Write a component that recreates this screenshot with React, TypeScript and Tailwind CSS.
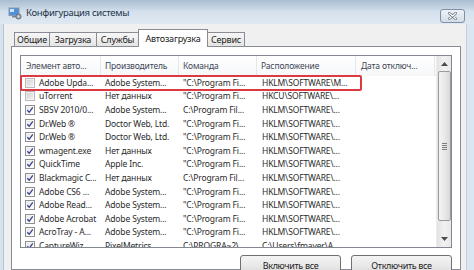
import React from "react";

type Row = { on: boolean; a: string; b: string; c: string; d: string };

const rows: Row[] = [
  { on: false, a: "Adobe Upda...", b: "Adobe System...", c: "\"C:\\Program Fi...", d: "HKLM\\SOFTWARE\\M..." },
  { on: false, a: "uTorrent", b: "Нет данных", c: "\"C:\\Program Fi...", d: "HKCU\\SOFTWARE\\..." },
  { on: true, a: "SBSV 2010/0...", b: "Adobe System...", c: "C:\\Program Fil...", d: "HKLM\\SOFTWARE\\..." },
  { on: true, a: "Dr.Web ®", b: "Doctor Web, Ltd.", c: "\"C:\\Program Fi...", d: "HKLM\\SOFTWARE\\..." },
  { on: true, a: "Dr.Web ®", b: "Doctor Web, Ltd.", c: "\"C:\\Program Fi...", d: "HKLM\\SOFTWARE\\..." },
  { on: true, a: "wmagent.exe", b: "Нет данных", c: "\"C:\\Program Fi...", d: "HKLM\\SOFTWARE\\..." },
  { on: true, a: "QuickTime", b: "Apple Inc.", c: "\"C:\\Program Fi...", d: "HKLM\\SOFTWARE\\..." },
  { on: true, a: "Blackmagic C...", b: "Нет данных", c: "C:\\Program Fil...", d: "HKLM\\SOFTWARE\\..." },
  { on: true, a: "Adobe CS6 ...", b: "Adobe System...", c: "\"C:\\Program Fi...", d: "HKLM\\SOFTWARE\\..." },
  { on: true, a: "Adobe Read...", b: "Adobe System...", c: "\"C:\\Program Fi...", d: "HKLM\\SOFTWARE\\..." },
  { on: true, a: "Adobe Acrobat", b: "Adobe System...", c: "\"C:\\Program Fi...", d: "HKLM\\SOFTWARE\\..." },
  { on: true, a: "AcroTray - A...", b: "Adobe System...", c: "\"C:\\Program Fi...", d: "HKLM\\SOFTWARE\\..." },
  { on: true, a: "CaptureWiz", b: "PixelMetrics", c: "C:\\PROGRA~2\\...", d: "C:\\Users\\fmayer\\A..." },
];

function Check({ on }: { on: boolean }) {
  return (
    <svg width="10" height="10" viewBox="0 0 10 10" className="shrink-0">
      <defs>
        <linearGradient id={on ? "cbOn" : "cbOff"} x1="0" y1="0" x2="1" y2="1">
          <stop offset="0" stopColor={on ? "#e4e4e4" : "#d2d2d2"} />
          <stop offset="1" stopColor={on ? "#ffffff" : "#f2f2f2"} />
        </linearGradient>
      </defs>
      <rect x="0.5" y="0.5" width="9" height="9" fill="#fff" stroke={on ? "#8f8f8f" : "#b8b8b8"} />
      <rect x="1.5" y="1.5" width="7" height="7" fill={`url(#${on ? "cbOn" : "cbOff"})`} />
      {on && <path d="M2.3 5.2 L4.2 7.3 L7.8 2.4" fill="none" stroke="#3a3f92" strokeWidth="1.3" />}
    </svg>
  );
}

function Tab({ label, w, selected, last }: { label: string; w: string; selected?: boolean; last?: boolean }) {
  if (selected) {
    return (
      <div className={`${w} h-[18px] -mb-[1px] bg-white border border-b-0 border-[#898c95] flex items-start justify-center pt-[2px] text-[9px] tracking-[-0.2px] text-[#222]`}>
        {label}
      </div>
    );
  }
  return (
    <div
      className={`${w} h-[14px] bg-gradient-to-b from-[#f7f7f7] to-[#e4e4e4] border border-b-0 ${last ? "border-l-0" : "border-r-0"} border-[#898c95] flex items-center justify-center text-[9px] tracking-[-0.2px] text-[#222] leading-none`}
    >
      {label}
    </div>
  );
}

function Button({ label }: { label: string }) {
  return (
    <div className="w-[101px] h-[22px] shrink-0 rounded-[3px] border border-[#707070] bg-gradient-to-b from-[#f4f4f4] via-[#e8e8e8] to-[#d4d4d4] flex items-center justify-center text-[9px] tracking-[-0.35px] text-[#222]">
      {label}
    </div>
  );
}

export default function App() {
  return (
    <div className="relative w-[474px] h-[270px] overflow-hidden flex flex-col bg-[#dbe5f0] font-['Noto_Sans',sans-serif]">
      {/* title bar */}
      <div className="h-[24px] shrink-0 flex items-center pl-[8px] pr-[9px] bg-gradient-to-b from-[#aabdd1] via-[#d5e1ed] to-[#dfe8f2]">
        <svg width="14" height="13" viewBox="0 0 14 13" className="shrink-0 mt-[2px]">
          <rect x="0.5" y="0.5" width="11" height="8.5" fill="#8797ad" />
          <rect x="1.5" y="1.5" width="9" height="6.5" fill="#4f8fdc" />
          <rect x="2" y="2" width="4" height="3" fill="#cfe3fa" />
          <rect x="4" y="9" width="4" height="1.5" fill="#7a8799" />
          <circle cx="10.5" cy="9.5" r="2.6" fill="#9aa3ad" stroke="#5d6670" strokeWidth="0.8" />
          <circle cx="10.5" cy="9.5" r="0.9" fill="#e8ecf0" />
        </svg>
        <span className="ml-[4px] mt-[2px] text-[9.5px] tracking-[-0.3px] text-[#26344a] leading-none">Конфигурация системы</span>
        <div className="flex-1" />
        <div className="w-[25px] h-[14px] mt-[7px] rounded-[3px] border border-[#7f8fa5] bg-gradient-to-b from-[#eef2f7] to-[#d3dce7] flex items-center justify-center">
          <svg width="9" height="8" viewBox="0 0 9 8">
            <path d="M1 1 L8 7 M8 1 L1 7" stroke="#5a6574" strokeWidth="2.6" strokeLinecap="round" />
            <path d="M1 1 L8 7 M8 1 L1 7" stroke="#ffffff" strokeWidth="1.2" strokeLinecap="round" />
          </svg>
        </div>
      </div>

      {/* body */}
      <div className="flex-1 flex min-h-0">
        <div className="w-[4px] shrink-0 bg-[#d7e2ee] border-r border-[#b7c4d3]" />
        <div className="flex-1 flex flex-col bg-[#f0f0f0] pl-[7px] pr-[5px] pt-[5px] min-h-0">
          {/* tabs */}
          <div className="flex items-end pl-[3px] h-[17px] relative z-10">
            <Tab label="Общие" w="w-[35px]" />
            <Tab label="Загрузка" w="w-[47px]" />
            <Tab label="Службы" w="w-[42px]" />
            <Tab label="Автозагрузка" w="w-[70px]" selected />
            <Tab label="Сервис" w="w-[37px]" last />
          </div>
          {/* panel */}
          <div className="flex-1 bg-white border border-[#898c95] pt-[8px] pl-[8px] pr-[8px] flex flex-col min-h-0">
            {/* list */}
            <div className="h-[193px] shrink-0 border border-[#828790] flex overflow-hidden">
              <div className="flex-1 flex flex-col overflow-hidden text-[8.5px] tracking-[-0.15px]">
                {/* header */}
                <div className="h-[20px] shrink-0 flex bg-gradient-to-b from-white to-[#f6f7f9] text-[#3e4756] leading-[12px]">
                  <div className="w-[80px] pl-[5px] flex items-center border-r border-[#e3e6ea] whitespace-nowrap">Элемент авто...</div>
                  <div className="w-[78px] pl-[4px] flex items-center border-r border-[#e3e6ea] whitespace-nowrap">Производитель</div>
                  <div className="w-[78px] pl-[4px] flex items-center border-r border-[#e3e6ea] whitespace-nowrap">Команда</div>
                  <div className="w-[99px] pl-[4px] flex items-center border-r border-[#e3e6ea] whitespace-nowrap">Расположение</div>
                  <div className="w-[79px] pl-[5px] flex items-center border-r border-[#e3e6ea] whitespace-nowrap">Дата отключ...</div>
                </div>
                {rows.map((r, i) => (
                  <div key={i} className="h-[13.6px] shrink-0 flex items-center text-[#2a2a2a] whitespace-nowrap leading-[12px]">
                    <div className="w-[80px] pl-[4px] flex items-center gap-[4px]">
                      <Check on={r.on} />
                      <span>{r.a}</span>
                    </div>
                    <div className="w-[78px] pl-[4px]">{r.b}</div>
                    <div className="w-[78px] pl-[4px]">{r.c}</div>
                    <div className="w-[99px] pl-[5px]">{r.d}</div>
                    <div className="w-[79px]" />
                  </div>
                ))}
              </div>
              {/* scrollbar */}
              <div className="w-[15px] shrink-0 bg-gradient-to-r from-[#e3e3e3] via-[#f2f2f2] to-[#e8e8e8] border-l border-[#ececec] flex flex-col items-center pt-[2px]">
                <div className="h-[12px] w-full flex items-center justify-center">
                  <svg width="7" height="4" viewBox="0 0 7 4"><path d="M0 4 L3.5 0 L7 4 Z" fill="#4d4d4d" /></svg>
                </div>
                <div className="h-[150px] w-[13px] mt-[1px] rounded-[2px] border border-[#9a9a9a] bg-gradient-to-r from-[#f4f4f4] via-[#e9e9e9] to-[#d8d8d8] flex flex-col items-center justify-center gap-[1px]">
                  <div className="w-[5px] h-[1px] bg-[#7d7d7d]" />
                  <div className="w-[5px] h-[1px] bg-[#7d7d7d]" />
                  <div className="w-[5px] h-[1px] bg-[#7d7d7d]" />
                  <div className="w-[5px] h-[1px] bg-[#7d7d7d]" />
                </div>
                <div className="flex-1" />
                <div className="h-[12px] w-full flex items-center justify-center mb-[2px]">
                  <svg width="7" height="4" viewBox="0 0 7 4"><path d="M0 0 L3.5 4 L7 0 Z" fill="#4d4d4d" /></svg>
                </div>
              </div>
            </div>
            {/* buttons */}
            <div className="flex justify-end gap-[10px] mt-[7px]">
              <Button label="Включить все" />
              <Button label="Отключить все" />
            </div>
          </div>
        </div>
        <div className="w-[8px] shrink-0 bg-[#dce6f1] border-l border-[#c4cfdc]" />
      </div>

      {/* red highlight */}
      <div className="absolute left-[20px] top-[75px] w-[342px] h-[16px] border-2 border-[#dc3a42] rounded-[2px] pointer-events-none" />
    </div>
  );
}
